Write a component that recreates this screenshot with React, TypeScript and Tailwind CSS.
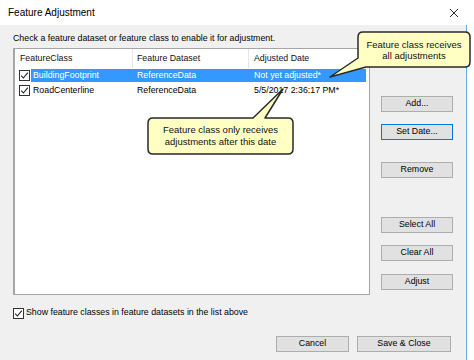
import React from "react";

function Check({ size = 11 }: { size?: number }) {
  return (
    <svg width={size} height={size} viewBox="0 0 11 11" className="shrink-0">
      <rect x="0.5" y="0.5" width="10" height="10" fill="white" stroke="#333" />
      <path d="M2.2 5.6 L4.4 8 L8.8 2.6" fill="none" stroke="#222" strokeWidth="1.1" />
    </svg>
  );
}

function Btn({ label, focused = false, w = "w-[72px]" }: { label: string; focused?: boolean; w?: string }) {
  return (
    <div
      className={`${w} h-[16px] flex items-center justify-center bg-[#e1e1e1] border text-[8.8px] text-black ${
        focused ? "border-[#0078d7]" : "border-[#adadad]"
      }`}
    >
      {label}
    </div>
  );
}

function Row({ name, ds, date, selected }: { name: string; ds: string; date: string; selected?: boolean }) {
  return (
    <div className="h-[15px] flex items-center pl-[4px]">
      <Check />
      <div
        className={`ml-[1px] w-[335px] h-[13px] flex items-center text-[8.8px] ${
          selected ? "bg-[#3399ff] text-white" : "text-black"
        }`}
      >
        <div className="w-[102px] pl-[2px]">{name}</div>
        <div className="w-[116px] pl-[4px]">{ds}</div>
        <div className="flex-1 pl-[5px]">{date}</div>
      </div>
    </div>
  );
}

export default function App() {
  return (
    <div className="w-[474px] h-[360px] relative bg-white overflow-hidden font-['Liberation_Sans',Arial,sans-serif] text-black">
      <div className="h-[25px] flex items-center justify-between pl-[8px] pr-[15px] bg-white">
        <span className="text-[10px]">Feature Adjustment</span>
        <svg width="10" height="10" viewBox="0 0 10 10">
          <path d="M1 1 L9 9 M9 1 L1 9" stroke="#111" strokeWidth="0.9" />
        </svg>
      </div>
      <div className="w-[467px] h-[335px] bg-[#f0f0f0] border-r border-[#5aaee0] pl-[13px] flex flex-col">
        <div className="h-[23px] pt-[7px] text-[8.8px] leading-[12px]">
          Check a feature dataset or feature class to enable it for adjustment.
        </div>
        <div className="flex h-[247px]">
          <div className="w-[357px] h-full bg-white border border-[#a5a5a5] border-l-2 flex flex-col">
            <div className="h-[19px] flex text-[8.8px] text-[#111]">
              <div className="w-[118px] pl-[5px] flex items-center border-r border-[#e5e5e5]">FeatureClass</div>
              <div className="w-[116px] pl-[4px] flex items-center border-r border-[#e5e5e5]">Feature Dataset</div>
              <div className="flex-1 pl-[5px] flex items-center">Adjusted Date</div>
            </div>
            <Row name="BuildingFootprint" ds="ReferenceData" date="Not yet adjusted*" selected />
            <Row name="RoadCenterline" ds="ReferenceData" date="5/5/2017 2:36:17 PM*" />
          </div>
          <div className="ml-[11px] flex flex-col w-[72px]">
            <div className="mt-[48px]">
              <Btn label="Add..." />
            </div>
            <div className="mt-[12px]">
              <Btn label="Set Date..." focused />
            </div>
            <div className="mt-[22px]">
              <Btn label="Remove" />
            </div>
            <div className="mt-[39px]">
              <Btn label="Select All" />
            </div>
            <div className="mt-[12px]">
              <Btn label="Clear All" />
            </div>
            <div className="mt-[13px]">
              <Btn label="Adjust" />
            </div>
          </div>
        </div>
        <div className="mt-[12px] h-[12px] flex items-center gap-[2px] text-[8.8px]">
          <Check />
          <span>Show feature classes in feature datasets in the list above</span>
        </div>
        <div className="mt-[17px] flex justify-end gap-[8px] pr-[15px]">
          <Btn label="Cancel" w="w-[73px]" />
          <Btn label="Save & Close" w="w-[94px]" />
        </div>
      </div>

      <svg className="absolute inset-0 pointer-events-none" width="474" height="360" viewBox="0 0 474 360">
        <path
          d="M363 32 H465 Q470 32 470 37 V62 Q470 67 465 67 H366 L330 77 L358 58 V37 Q358 32 363 32 Z"
          fill="#ffffc4"
          stroke="#2a2a2a"
          strokeWidth="1.5"
          strokeLinejoin="round"
        />
        <path
          d="M153 118 H253 L283 89 L265 118 H288 Q293 118 293 123 V149 Q293 154 288 154 H153 Q148 154 148 149 V123 Q148 118 153 118 Z"
          fill="#ffffc4"
          stroke="#2a2a2a"
          strokeWidth="1.5"
          strokeLinejoin="round"
        />
      </svg>
      <div className="absolute left-[358px] top-[32px] w-[112px] h-[35px] flex flex-col items-center justify-center text-[9.5px] leading-[11px] text-[#111]">
        <span>Feature class receives</span>
        <span>all adjustments</span>
      </div>
      <div className="absolute left-[148px] top-[118px] w-[145px] h-[36px] flex flex-col items-center justify-center text-[9.5px] leading-[12px] text-[#111]">
        <span>Feature class only receives</span>
        <span>adjustments after this date</span>
      </div>
    </div>
  );
}
